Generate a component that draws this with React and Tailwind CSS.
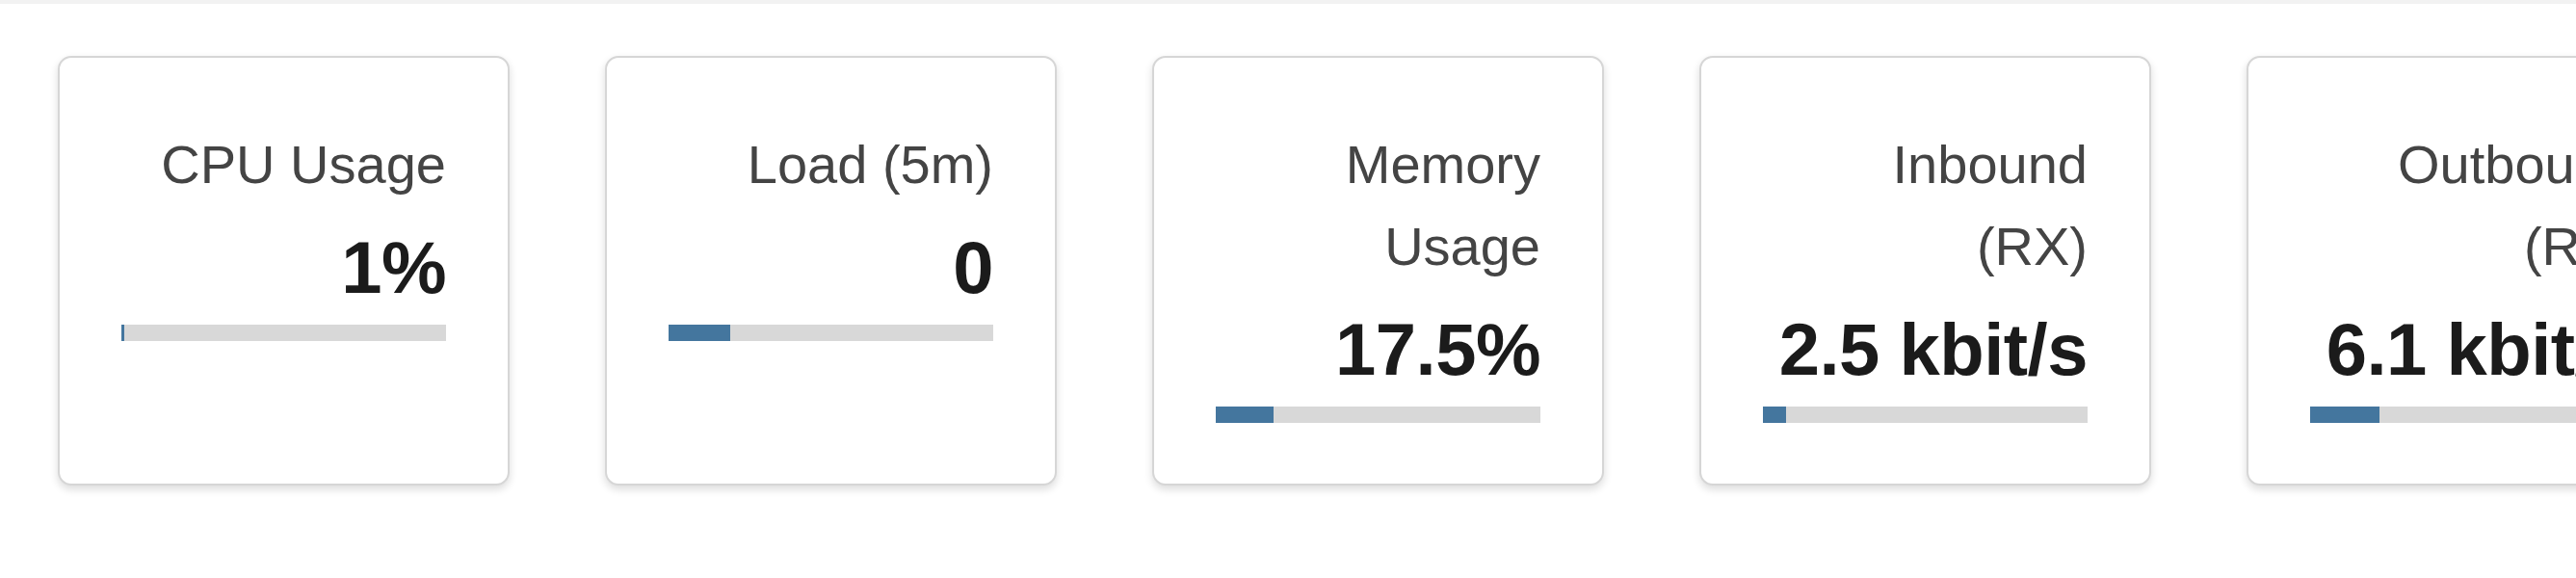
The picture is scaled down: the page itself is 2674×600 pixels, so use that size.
import React from 'react';

const stats = [
  { title: 'CPU Usage', value: '1%', fill: 3 },
  { title: 'Load (5m)', value: '0', fill: 64 },
  { title: 'Memory Usage', value: '17.5%', fill: 60 },
  { title: 'Inbound (RX)', value: '2.5 kbit/s', fill: 24 },
  { title: 'Outbound (RX)', value: '6.1 kbit/s', fill: 72 },
];

const StatCard = ({ title, value, fill }) => (
  <div className="flex-none w-[469px] bg-white border-2 border-[#d6d6d6] rounded-[14px] shadow-[0_4px_8px_rgba(0,0,0,0.14)] px-[64px] pt-[68px] pb-[63px]">
    <div className="ml-auto max-w-[320px] text-right text-[56px] leading-[85px] text-[#444444]">{title}</div>
    <div className="mt-[20px] text-right text-[76px] leading-[89px] font-bold tracking-[-0.5px] text-[#1b1b1b] whitespace-nowrap">{value}</div>
    <div className="mt-[15px] h-[17px] bg-[#d8d8d8]">
      <div className="h-full bg-[#44769e]" style={{ width: `${fill}px` }} />
    </div>
  </div>
);

export default function App() {
  return (
    <div className="h-[600px] w-full overflow-hidden bg-white border-t-4 border-[#f2f2f2] font-['Liberation_Sans',Arial,sans-serif]">
      <div className="flex gap-[99px] pl-[60px] pt-[54px]">
        {stats.map((s) => (
          <StatCard key={s.title} {...s} />
        ))}
      </div>
    </div>
  );
}
